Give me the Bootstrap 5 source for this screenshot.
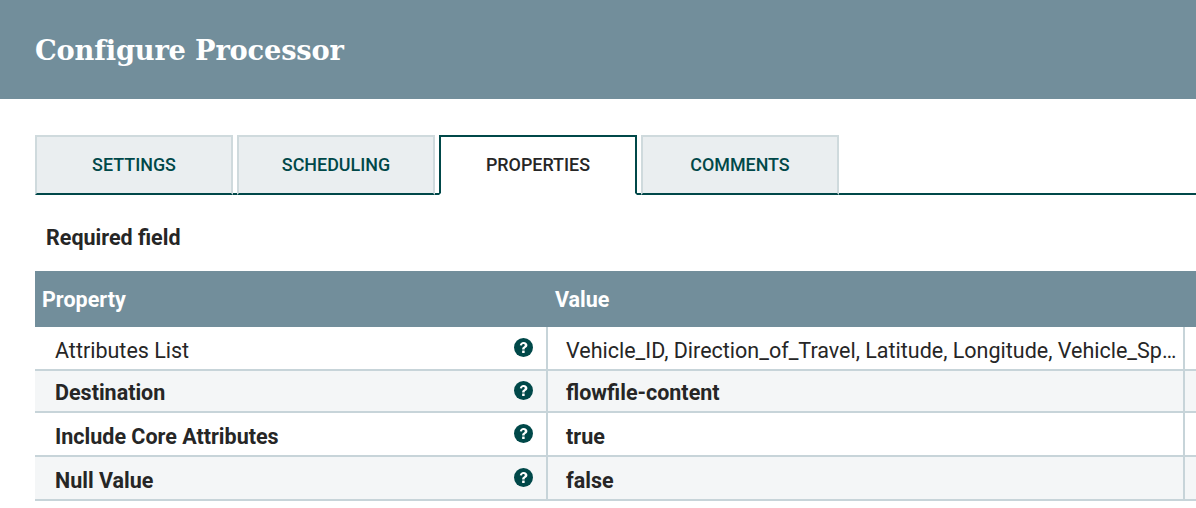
<!DOCTYPE html>
<html lang="en">
<head>
<meta charset="utf-8">
<title>Configure Processor</title>
<link href="https://cdn.jsdelivr.net/npm/bootstrap@5.3.0/dist/css/bootstrap.min.css" rel="stylesheet">
<style>
html,body{height:508px;overflow:hidden;background:#fff;}
body{font-family:Roboto,"Liberation Sans",sans-serif;color:#262626;}
.dlg-head{height:99px;background:#728e9b;padding:2px 35px 0;}
.dlg-title{font-family:"DejaVu Serif",serif;font-weight:700;font-size:27.3px;color:#fff;margin:0;line-height:1;letter-spacing:-.2px;}
.dlg-tabs{margin:36px 0 0 35px;height:60px;border-bottom:2px solid #004849;gap:4px;flex-wrap:nowrap;}
.dlg-tabs .nav-link{width:198px;height:60px;display:flex;align-items:center;justify-content:center;background:#eaeef0;border:2px solid #cfdadd;border-bottom:2px solid #004849;border-radius:0;color:#004849;font-size:17.9px;font-weight:500;padding:0;margin:0;}
.dlg-tabs .nav-link.active{background:#fff;color:#262626;border-color:#004849;border-bottom-color:#fff;}
.req-note{margin:30px 0 0 46px;font-size:21.5px;font-weight:700;line-height:26px;height:46px;}
.prop-wrap{margin-left:35px;}
.prop-table{table-layout:fixed;width:1161px;margin:0;border-collapse:separate;border-spacing:0;font-size:21.5px;}
.prop-table>thead>tr>th{background:#728e9b;color:#fff;height:56px;padding:3px 0 0 7px;font-weight:700;border:0;vertical-align:middle;box-shadow:none;}
.prop-table>tbody>tr>td{padding:0;border:0;border-bottom:2px solid #c7d4d9;border-right:2px solid #c7d4d9;color:#262626;vertical-align:middle;background:#fff;box-shadow:none;line-height:26px;}
.prop-table>tbody>tr.alt>td{background:#f4f6f7;}
.prop-table>tbody>tr.alt>td,.prop-table>tbody>tr.bolded>td{font-weight:700;}
.prop-table .cell-last{border-right:0!important;}
.r1,.r3,.r4{height:44px;}.r2{height:42px;}
.name-cell{display:flex;justify-content:space-between;align-items:center;padding:5px 13px 0 20px;}
.val-cell{padding:5px 3px 0 18px;white-space:nowrap;overflow:hidden;text-overflow:ellipsis;}
.r2 .name-cell,.r2 .val-cell{padding-top:3px;}
.help-ico{width:19px;height:19px;flex:none;display:block;margin-top:-7px;}
.r2 .help-ico{margin-top:-4px;}
</style>
</head>
<body>
<header class="dlg-head d-flex align-items-center"><h1 class="dlg-title">Configure Processor</h1></header>
<ul class="nav dlg-tabs">
  <li class="nav-item"><a class="nav-link" href="#">SETTINGS</a></li>
  <li class="nav-item"><a class="nav-link" href="#">SCHEDULING</a></li>
  <li class="nav-item"><a class="nav-link active" href="#">PROPERTIES</a></li>
  <li class="nav-item"><a class="nav-link" href="#">COMMENTS</a></li>
</ul>
<div class="req-note">Required field</div>
<div class="prop-wrap">
<table class="table prop-table">
  <colgroup><col style="width:513px"><col style="width:637px"><col></colgroup>
  <thead><tr><th>Property</th><th>Value</th><th></th></tr></thead>
  <tbody>
    <tr class="r1"><td><div class="name-cell">Attributes List<svg class="help-ico" viewBox="0 0 18 18"><circle cx="9" cy="9" r="9" fill="#004849"/><path d="M5.5 6.9C5.7 4.9 7.2 3.7 9.1 3.7c2.1 0 3.6 1.3 3.6 3 0 1.3-.7 2-1.6 2.6-.8.5-1 .8-1 1.5H7.7c0-1.3.4-2 1.4-2.6.7-.4 1.1-.8 1.1-1.3 0-.6-.5-1.1-1.2-1.1-.8 0-1.3.5-1.4 1.3z" fill="#fff"/><rect x="7.7" y="11.8" width="2.4" height="2.4" rx=".3" fill="#fff"/></svg></div></td><td><div class="val-cell">Vehicle_ID, Direction_of_Travel, Latitude, Longitude, Vehicle_Speed, Timestamp</div></td><td class="cell-last"></td></tr>
    <tr class="r2 alt"><td><div class="name-cell">Destination<svg class="help-ico" viewBox="0 0 18 18"><circle cx="9" cy="9" r="9" fill="#004849"/><path d="M5.5 6.9C5.7 4.9 7.2 3.7 9.1 3.7c2.1 0 3.6 1.3 3.6 3 0 1.3-.7 2-1.6 2.6-.8.5-1 .8-1 1.5H7.7c0-1.3.4-2 1.4-2.6.7-.4 1.1-.8 1.1-1.3 0-.6-.5-1.1-1.2-1.1-.8 0-1.3.5-1.4 1.3z" fill="#fff"/><rect x="7.7" y="11.8" width="2.4" height="2.4" rx=".3" fill="#fff"/></svg></div></td><td><div class="val-cell">flowfile-content</div></td><td class="cell-last"></td></tr>
    <tr class="r3 bolded"><td><div class="name-cell">Include Core Attributes<svg class="help-ico" viewBox="0 0 18 18"><circle cx="9" cy="9" r="9" fill="#004849"/><path d="M5.5 6.9C5.7 4.9 7.2 3.7 9.1 3.7c2.1 0 3.6 1.3 3.6 3 0 1.3-.7 2-1.6 2.6-.8.5-1 .8-1 1.5H7.7c0-1.3.4-2 1.4-2.6.7-.4 1.1-.8 1.1-1.3 0-.6-.5-1.1-1.2-1.1-.8 0-1.3.5-1.4 1.3z" fill="#fff"/><rect x="7.7" y="11.8" width="2.4" height="2.4" rx=".3" fill="#fff"/></svg></div></td><td><div class="val-cell">true</div></td><td class="cell-last"></td></tr>
    <tr class="r4 alt"><td><div class="name-cell">Null Value<svg class="help-ico" viewBox="0 0 18 18"><circle cx="9" cy="9" r="9" fill="#004849"/><path d="M5.5 6.9C5.7 4.9 7.2 3.7 9.1 3.7c2.1 0 3.6 1.3 3.6 3 0 1.3-.7 2-1.6 2.6-.8.5-1 .8-1 1.5H7.7c0-1.3.4-2 1.4-2.6.7-.4 1.1-.8 1.1-1.3 0-.6-.5-1.1-1.2-1.1-.8 0-1.3.5-1.4 1.3z" fill="#fff"/><rect x="7.7" y="11.8" width="2.4" height="2.4" rx=".3" fill="#fff"/></svg></div></td><td><div class="val-cell">false</div></td><td class="cell-last"></td></tr>
  </tbody>
</table>
</div>
<script src="https://cdn.jsdelivr.net/npm/bootstrap@5.3.0/dist/js/bootstrap.bundle.min.js"></script>
</body>
</html>
